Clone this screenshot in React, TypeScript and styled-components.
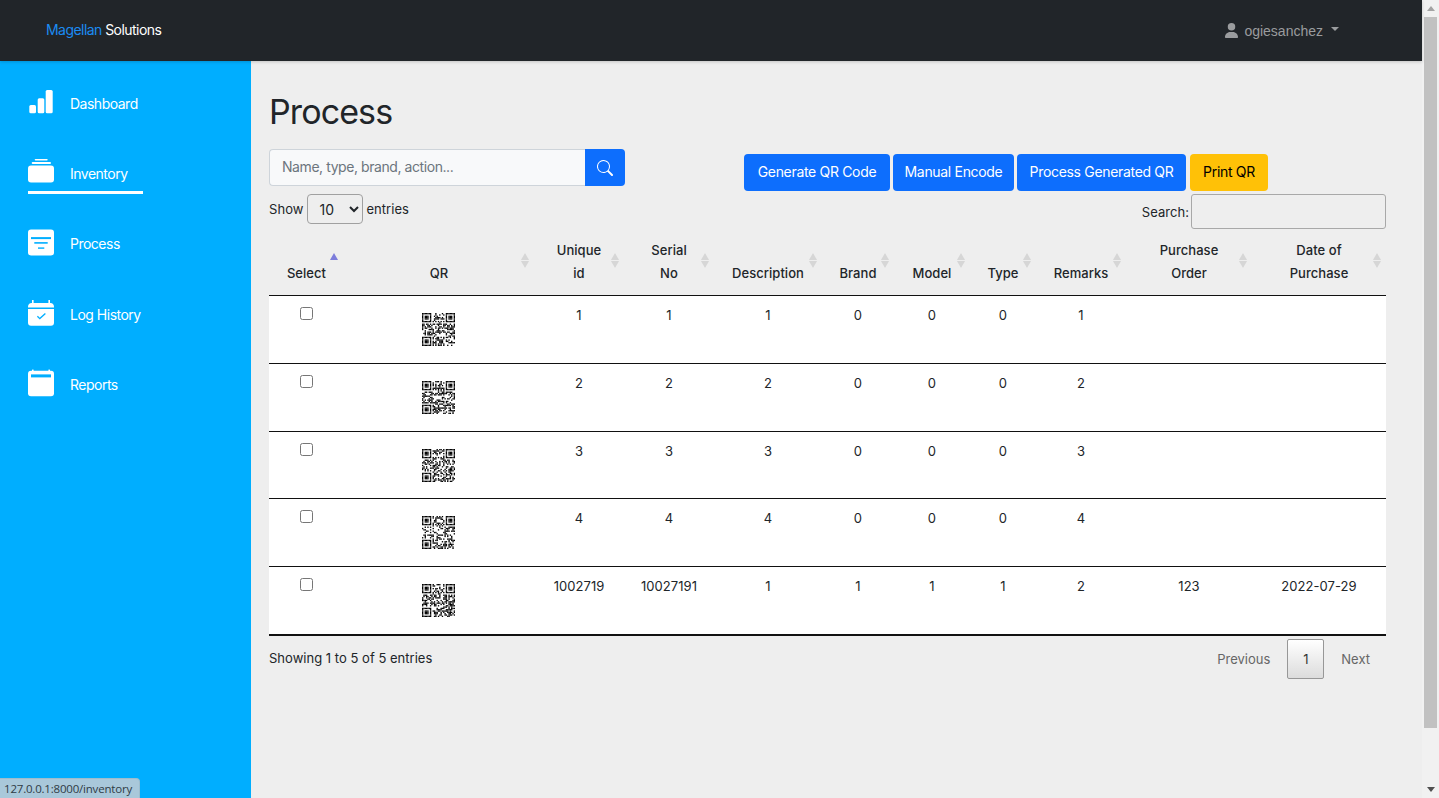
import React from "react";
import styled, { createGlobalStyle } from "styled-components";

const Global = createGlobalStyle`
  html, body { margin: 0; padding: 0; height: 798px; overflow: hidden; background: #eee; }
  body { font-family: Inter, "Liberation Sans", sans-serif; font-size: 14px; color: #212529; }
  * { box-sizing: border-box; }
`;

const Viewport = styled.div`display: flex; width: 1439px; height: 798px; position: relative; overflow: hidden;`;
const Page = styled.div`flex: 1; min-width: 0; display: flex; flex-direction: column;`;
const TopBar = styled.header`
  height: 61px; flex: none; background: #212529; display: flex; align-items: center;
  padding: 0 83px 0 46px; justify-content: space-between; box-shadow: 0 1px 3px rgba(0,0,0,.18); position: relative;
`;
const Brand = styled.div`font-size: 14px; letter-spacing: -0.55px; color: #fff; margin-top: -2px; span { color: #1b8cf2; }`;
const UserMenu = styled.div`
  display: flex; align-items: center; color: #9a9c9e; font: 14px "Liberation Sans", Arial, sans-serif;
  svg { width: 15px; height: 15px; margin-right: 5px; }
`;
const Caret = styled.i`
  width: 0; height: 0; margin-left: 8px; margin-top: -3px;
  border-left: 4px solid transparent; border-right: 4px solid transparent; border-top: 4px solid #9a9c9e;
`;
const Body = styled.div`flex: 1; display: flex; min-height: 0;`;
const Sidebar = styled.nav`
  width: 251px; flex: none; background: #00aeff; padding: 7px 0 0 28px; display: flex; flex-direction: column;
`;
const NavItem = styled.a<{ $active?: boolean }>`
  height: 70.3px; flex: none; width: 115px; display: flex; align-items: center; gap: 16px; color: #fff;
  font-size: 14px; letter-spacing: -0.5px; position: relative; white-space: nowrap;
  svg { width: 26px; height: 26px; flex: none; overflow: visible; margin-top: 2px; }
  ${(p) => p.$active && `&::after { content: ""; position: absolute; left: 0; right: 0; top: 53px; height: 3px; background: #fff; }`}
`;
const Content = styled.main`flex: 1; min-width: 0; padding: 27px 36px 0 18px;`;
const Title = styled.h1`margin: 0; font-size: 34px; font-weight: 400; line-height: 48px; height: 61px; letter-spacing: -0.9px;`;
const Toolbar = styled.div`display: flex; height: 45px;`;
const SearchForm = styled.form`display: flex; width: 356px; height: 37px;`;
const SearchInput = styled.input`
  flex: 1; min-width: 0; height: 37px; background: #f8f9fa; border: 1px solid #ced4da; border-right: 0;
  border-radius: 4px 0 0 4px; padding: 0 12px 2px; font: 14px Inter, sans-serif; letter-spacing: -0.43px;
  &::placeholder { color: #6c757d; opacity: 1; }
`;
const SearchButton = styled.button`
  width: 40px; border: 0; background: #0d6efd; color: #fff; border-radius: 0 4px 4px 0; padding: 0;
  display: flex; align-items: center; justify-content: center;
`;
const Actions = styled.div`display: flex; gap: 3px; margin: 5px 0 0 119px; height: 37px;`;
const ActionButton = styled.button<{ $warn?: boolean; $w: number }>`
  height: 37px; border: 0; border-radius: 4px; padding: 0 0 2px; width: ${(p) => p.$w}px;
  background: ${(p) => (p.$warn ? "#ffc107" : "#0d6efd")}; color: ${(p) => (p.$warn ? "#000" : "#fff")};
  font: 14px Inter, sans-serif; letter-spacing: -0.32px; margin-left: ${(p) => (p.$warn ? "1px" : "0")};
`;
const TableControls = styled.div`display: flex; justify-content: space-between; height: 35px; font-size: 13px; letter-spacing: 0.05px;`;
const Length = styled.label`display: flex; align-items: center; height: 30px; gap: 3px;`;
const LengthSelect = styled.select`
  width: 56px; height: 30px; padding: 0 0 0 7px; border: 1px solid #a0a0a0; border-radius: 4px; background: #eee;
  font: 14px Inter, sans-serif; color: #212529; margin-left: 1px;
`;
const Filter = styled.label`display: flex; align-items: center; height: 35px; gap: 2px;`;
const FilterInput = styled.input`width: 195px; height: 35px; border: 1px solid #a8a8a8; border-radius: 3px; background: #eee;`;
const Table = styled.table`
  width: 1117px; table-layout: fixed; border-collapse: separate; border-spacing: 0; font-size: 13px;
`;
const HeadCell = styled.th`
  height: 67px; border-bottom: 1px solid #111; padding: 10px 0 10px; vertical-align: bottom; text-align: center;
  font-weight: 500; line-height: 23px; letter-spacing: 0.05px; position: relative;
`;
const Sort = styled.span`
  position: absolute; right: 5px; top: 24px; display: flex; flex-direction: column; gap: 1px;
  &::before, &::after { content: ""; width: 0; height: 0; border-left: 4px solid transparent; border-right: 4px solid transparent; }
  &::before { border-bottom: 7px solid #d6d6d6; }
  &::after { border-top: 7px solid #d6d6d6; }
`;
const SortActive = styled.span`
  position: absolute; right: 6px; top: 24px; width: 0; height: 0;
  border-left: 4px solid transparent; border-right: 4px solid transparent; border-bottom: 7.5px solid #7d7ddb;
`;
const Row = styled.tr<{ $h: number }>`height: ${(p) => p.$h}px; background: #fff;`;
const Cell = styled.td<{ $last?: boolean }>`
  padding: 9px 0 0; vertical-align: top; text-align: center; line-height: 21px; letter-spacing: 0.05px;
  border-bottom: ${(p) => (p.$last ? "2px solid #111" : "1px solid #111")};
`;
const CheckCell = styled(Cell)`padding-top: 8px;`;
const Check = styled.input`width: 13px; height: 13px; margin: 3px 0 0 31px; display: block;`;
const QrCell = styled(Cell)`padding-top: 8px;`;
const QrBox = styled.div`
  display: flex; justify-content: center; margin: 9px 2px 0 0;
  svg { width: 33px; height: 33px; display: block; filter: blur(.3px); }
`;
const Footer = styled.div`display: flex; justify-content: space-between; font-size: 13px; margin-top: 3px; padding-right: 16px;`;
const Info = styled.div`padding-top: 11px; line-height: 16px; letter-spacing: 0.02px;`;
const Pager = styled.div`display: flex; align-items: center; color: #666; gap: 17px;`;
const PageNum = styled.span`
  width: 37px; height: 40px; border: 1px solid #979797; border-radius: 2px; display: flex; align-items: center; justify-content: center;
  background: linear-gradient(#fff, #dcdcdc); color: #333;
`;
const ScrollTrack = styled.aside`width: 17px; flex: none; background: #f1f1f1; display: flex; flex-direction: column; align-items: center;`;
const ArrowUp = styled.i`width: 0; height: 0; margin: 6px 0 6px; border-left: 4px solid transparent; border-right: 4px solid transparent; border-bottom: 5px solid #a3a3a3;`;
const Thumb = styled.div`width: 13px; height: 711px; background: #c1c1c1;`;
const ArrowDown = styled.i`width: 0; height: 0; margin-top: auto; margin-bottom: 6px; border-left: 4px solid transparent; border-right: 4px solid transparent; border-top: 5px solid #505050;`;
const Status = styled.div`
  position: absolute; left: 0; bottom: 0; width: 140px; height: 20px; background: #a9c8da; border-radius: 0 4px 0 0; border: 1px solid #9dbccd; border-bottom: 0; border-left: 0;
  color: #2f3b45; font: 11.5px "Open Sans", sans-serif; letter-spacing: -0.2px; line-height: 19px; padding-left: 4px; white-space: nowrap;
`;

function qrMatrix(seed: number) {
  const n = 25;
  let s = seed;
  const rnd = () => { s = (s * 1664525 + 1013904223) >>> 0; return (s >>> 16) / 65536; };
  const m: boolean[][] = Array.from({ length: n }, () => Array.from({ length: n }, () => rnd() > 0.54));
  const finder = (x: number, y: number) => {
    for (let j = -1; j < 8; j++) for (let i = -1; i < 8; i++) {
      const a = x + i, b = y + j;
      if (a < 0 || b < 0 || a >= n || b >= n) continue;
      const ring = i >= 0 && i < 7 && j >= 0 && j < 7 && (i === 0 || i === 6 || j === 0 || j === 6);
      const core = i >= 2 && i <= 4 && j >= 2 && j <= 4;
      m[b][a] = ring || core;
    }
  };
  finder(0, 0); finder(18, 0); finder(0, 18);
  for (let i = 8; i < 17; i++) { m[6][i] = i % 2 === 0; m[i][6] = i % 2 === 0; }
  return m;
}

function Qr({ seed }: { seed: number }) {
  const m = qrMatrix(seed);
  return (
    <svg viewBox="0 0 25 25" aria-hidden="true">
      {m.map((r, y) => r.map((on, x) => (on ? <rect key={`${x}-${y}`} x={x} y={y} width="1.02" height="1.02" fill="#000" /> : null)))}
    </svg>
  );
}

const BLUE = "#00aeff";
const IconDash = () => (
  <svg viewBox="0 0 26 26" fill="#fff">
    <rect x="1.3" y="14" width="6.7" height="8.3" rx="1.5" />
    <rect x="9.7" y="7.3" width="6.6" height="15" rx="1.5" />
    <rect x="17.7" y="-1" width="7" height="23.3" rx="1.5" />
  </svg>
);
const IconInv = () => (
  <svg viewBox="0 0 26 26" fill="#fff">
    <rect x="0" y="4.4" width="26" height="17" rx="3" />
    <rect x="3.7" y="1" width="19.3" height="2" rx="1" />
    <rect x="6.7" y="-2" width="13" height="1.6" rx=".8" />
  </svg>
);
const IconProc = () => (
  <svg viewBox="0 0 26 26" fill="#fff">
    <rect x="0" y="-2.6" width="26" height="26" rx="3" />
    <rect x="3" y="5.1" width="20" height="2" fill={BLUE} />
    <rect x="6.3" y="10.1" width="13.4" height="1.6" fill={BLUE} />
    <rect x="10" y="15.4" width="6.3" height="1.4" fill={BLUE} />
  </svg>
);
const IconLog = () => (
  <svg viewBox="0 0 26 26" fill="#fff">
    <path d="M0 5C0 2.5 1.5 1 3.5 1H22.5C24.5 1 26 2.5 26 5V5.6H0Z" />
    <rect x="4" y="-2" width="1.6" height="3" />
    <rect x="20.4" y="-2" width="1.6" height="3" />
    <path d="M0 7H26V20.7C26 22.5 24.8 23.7 23 23.7H3C1.2 23.7 0 22.5 0 20.7Z" />
    <path d="M9.4 14.2L11.8 16.6L17.4 11.4" stroke={BLUE} strokeWidth="1.3" fill="none" />
  </svg>
);
const IconRep = () => (
  <svg viewBox="0 0 26 26" fill="#fff">
    <rect x="0" y="-1.2" width="26" height="25.5" rx="3" />
    <rect x="4" y="-2.4" width="1.6" height="2" />
    <rect x="20.4" y="-2.4" width="1.6" height="2" />
    <rect x="3" y="2.4" width="20" height="3" fill={BLUE} />
  </svg>
);

const heads: [string[], number][] = [
  [["Select"], 75], [["QR"], 190], [["Unique", "id"], 90], [["Serial", "No"], 90], [["Description"], 108],
  [["Brand"], 72], [["Model"], 76], [["Type"], 66], [["Remarks"], 90], [["Purchase", "Order"], 126], [["Date of", "Purchase"], 134],
];
const rows = [
  { id: "1", sn: "1", d: "1", b: "0", m: "0", t: "0", r: "1", po: "", dt: "", h: 68, seed: 11 },
  { id: "2", sn: "2", d: "2", b: "0", m: "0", t: "0", r: "2", po: "", dt: "", h: 68, seed: 29 },
  { id: "3", sn: "3", d: "3", b: "0", m: "0", t: "0", r: "3", po: "", dt: "", h: 67, seed: 47 },
  { id: "4", sn: "4", d: "4", b: "0", m: "0", t: "0", r: "4", po: "", dt: "", h: 68, seed: 63 },
  { id: "1002719", sn: "10027191", d: "1", b: "1", m: "1", t: "1", r: "2", po: "123", dt: "2022-07-29", h: 69, seed: 85 },
];

export default function App() {
  return (
    <>
      <Global />
      <Viewport>
        <Page>
          <TopBar>
            <Brand><span>Magellan</span> Solutions</Brand>
            <UserMenu>
              <svg viewBox="0 0 448 512" fill="#9a9c9e"><path d="M224 256a128 128 0 1 0 0-256 128 128 0 1 0 0 256zm-45.7 48C79.8 304 0 383.8 0 482.3 0 498.7 13.3 512 29.7 512h388.6c16.4 0 29.7-13.3 29.7-29.7C448 383.8 368.2 304 269.7 304z" /></svg>
              ogiesanchez<Caret />
            </UserMenu>
          </TopBar>
          <Body>
            <Sidebar>
              <NavItem><IconDash />Dashboard</NavItem>
              <NavItem $active><IconInv />Inventory</NavItem>
              <NavItem><IconProc />Process</NavItem>
              <NavItem><IconLog />Log History</NavItem>
              <NavItem><IconRep />Reports</NavItem>
            </Sidebar>
            <Content>
              <Title>Process</Title>
              <Toolbar>
                <SearchForm>
                  <SearchInput placeholder="Name, type, brand, action..." />
                  <SearchButton type="button">
                    <svg width="16" height="16" viewBox="0 0 16 16" fill="#fff"><path d="M11.742 10.344a6.5 6.5 0 1 0-1.397 1.398h-.001c.03.04.062.078.098.115l3.85 3.85a1 1 0 0 0 1.415-1.414l-3.85-3.85a1.007 1.007 0 0 0-.115-.1zM12 6.5a5.5 5.5 0 1 1-11 0 5.5 5.5 0 0 1 11 0z" /></svg>
                  </SearchButton>
                </SearchForm>
                <Actions>
                  <ActionButton $w={146}>Generate QR Code</ActionButton>
                  <ActionButton $w={121}>Manual Encode</ActionButton>
                  <ActionButton $w={169}>Process Generated QR</ActionButton>
                  <ActionButton $w={78} $warn>Print QR</ActionButton>
                </Actions>
              </Toolbar>
              <TableControls>
                <Length>Show <LengthSelect defaultValue="10"><option>10</option><option>25</option></LengthSelect> entries</Length>
                <Filter>Search: <FilterInput /></Filter>
              </TableControls>
              <Table>
                <colgroup>{heads.map(([, w], i) => <col key={i} width={w} />)}</colgroup>
                <thead>
                  <tr>
                    {heads.map(([lines], i) => (
                      <HeadCell key={i}>
                        {lines.map((l, j) => <React.Fragment key={j}>{j > 0 && <br />}{l}</React.Fragment>)}
                        {i === 0 ? <SortActive /> : <Sort />}
                      </HeadCell>
                    ))}
                  </tr>
                </thead>
                <tbody>
                  {rows.map((r, i) => {
                    const last = i === rows.length - 1;
                    return (
                      <Row key={i} $h={r.h}>
                        <CheckCell $last={last}><Check type="checkbox" /></CheckCell>
                        <QrCell $last={last}><QrBox><Qr seed={r.seed} /></QrBox></QrCell>
                        {[r.id, r.sn, r.d, r.b, r.m, r.t, r.r, r.po, r.dt].map((v, k) => <Cell key={k} $last={last}>{v}</Cell>)}
                      </Row>
                    );
                  })}
                </tbody>
              </Table>
              <Footer>
                <Info>Showing 1 to 5 of 5 entries</Info>
                <Pager><span>Previous</span><PageNum>1</PageNum><span>Next</span></Pager>
              </Footer>
            </Content>
          </Body>
        </Page>
        <ScrollTrack><ArrowUp /><Thumb /><ArrowDown /></ScrollTrack>
        <Status>127.0.0.1:8000/inventory</Status>
      </Viewport>
    </>
  );
}
